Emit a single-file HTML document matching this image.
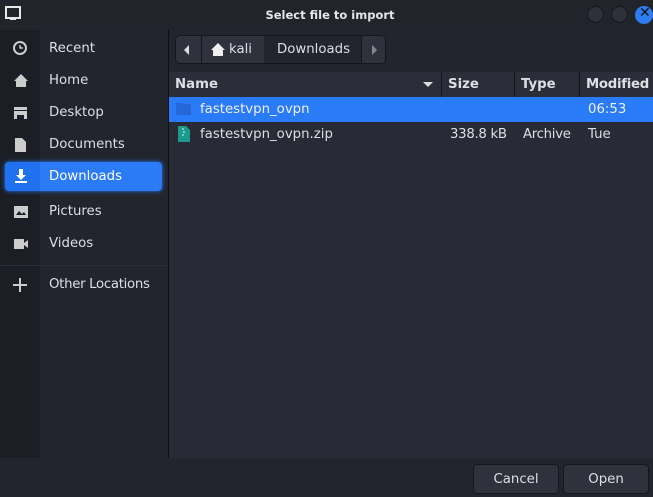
<!DOCTYPE html><html><head><style>
body{margin:0;width:653px;height:497px;background:#23252e;font-family:"DejaVu Sans","Liberation Sans",sans-serif;color:#dcdfe4;overflow:hidden;position:relative;font-size:13.3px}
.a{position:absolute}
.t{white-space:nowrap}
</style></head><body>
<div class="a" style="left:0;top:0;width:653px;height:30px;background:#22242c"></div>
<svg class="a" style="left:5px;top:6px" width="16" height="16"><rect x="1" y="1" width="14" height="11" fill="none" stroke="#e8e8e8" stroke-width="2"/><rect x="5" y="12" width="6" height="2" fill="#e8e8e8"/></svg>
<div class="a t" style="left:0;width:660px;top:8px;text-align:center;font-weight:bold;font-size:11.5px;color:#e4e6ea">Select file to import</div>
<div class="a" style="left:587px;top:6px;width:17px;height:17px;border-radius:50%;background:#2e313b;border:1px solid #15171c;box-sizing:border-box"></div>
<div class="a" style="left:611px;top:6px;width:17px;height:17px;border-radius:50%;background:#2e313b;border:1px solid #15171c;box-sizing:border-box"></div>
<div class="a" style="left:635px;top:6px;width:18px;height:18px;border-radius:50%;background:#2d7cf0"></div>
<div class="a t" style="left:639px;top:5px;font-size:14px;font-weight:bold;color:#111">✕</div>
<div class="a" style="left:0;top:30px;width:40px;height:428px;background:#1c1e25"></div>
<div class="a" style="left:0;top:265px;width:168px;height:1px;background:#2b2e37"></div>
<div class="a" style="left:168px;top:30px;width:1px;height:428px;background:#0e0f13"></div>
<div class="a" style="left:169px;top:30px;width:484px;height:428px;background:#282a36"></div>
<div class="a" style="left:169px;top:30px;width:484px;height:42px;background:#23252e"></div>
<div class="a" style="left:5px;top:162px;width:157px;height:29px;background:#2a7bf5;border-radius:4px;box-shadow:0 0 4px #2a7bf5"></div>
<div class="a" style="left:5px;top:162px;width:35px;height:29px;background:#2071f0;border-radius:4px 0 0 4px"></div>
<svg class="a" style="left:12px;top:40px" width="16" height="16"><circle cx="8" cy="8" r="6" fill="none" stroke="#ccc" stroke-width="2"/><path d="M8 5v3h3" stroke="#ccc" stroke-width="1.5" fill="none"/></svg>
<svg class="a" style="left:13px;top:73px" width="16" height="16"><path d="M1 8L8 1L15 8H13V14H3V8Z" fill="#ccc"/></svg>
<svg class="a" style="left:13px;top:105px" width="16" height="16"><rect x="1" y="2" width="13" height="3" fill="#ccc"/><rect x="1" y="6" width="13" height="8" fill="#ccc"/><rect x="4" y="10" width="7" height="4" fill="#1c1e25"/></svg>
<svg class="a" style="left:14px;top:137px" width="16" height="16"><path d="M1 1H8L12 5V15H1Z" fill="#ccc"/></svg>
<svg class="a" style="left:13px;top:168px" width="16" height="16"><path d="M6 1H10V7H13L8 12L3 7H6Z M2 13H14V15H2Z" fill="#fff"/></svg>
<svg class="a" style="left:13px;top:204px" width="16" height="16"><rect x="1" y="2" width="14" height="12" fill="#ccc"/><path d="M3 11L6 7L9 10L11 8L13 11Z" fill="#1c1e25"/></svg>
<svg class="a" style="left:13px;top:236px" width="16" height="16"><rect x="1" y="3" width="10" height="10" fill="#ccc"/><path d="M11 7L15 4V12L11 9Z" fill="#ccc"/></svg>
<svg class="a" style="left:12px;top:277px" width="16" height="16"><path d="M8 1V15M1 8H15" stroke="#ccc" stroke-width="2"/></svg>
<div class="a t" style="left:49px;top:41px">Recent</div>
<div class="a t" style="left:49px;top:73px">Home</div>
<div class="a t" style="left:49px;top:105px">Desktop</div>
<div class="a t" style="left:49px;top:137px">Documents</div>
<div class="a t" style="left:49px;top:169px;color:#fff">Downloads</div>
<div class="a t" style="left:49px;top:204px">Pictures</div>
<div class="a t" style="left:49px;top:236px">Videos</div>
<div class="a t" style="left:49px;top:277px;letter-spacing:-0.3px">Other Locations</div>
<div class="a" style="left:175px;top:35px;width:211px;height:29px;border:1px solid #15171c;border-radius:5px;background:#2f323c;box-sizing:border-box;overflow:hidden">
 <div class="a" style="left:25px;top:0;width:1px;height:29px;background:#15171c"></div>
 <div class="a" style="left:88px;top:0;width:97px;height:29px;background:#23252e"></div>
 <div class="a" style="left:185px;top:0;width:1px;height:29px;background:#15171c"></div>
</div>
<div class="a" style="left:184px;top:45px;width:0;height:0;border-top:5px solid transparent;border-bottom:5px solid transparent;border-right:5px solid #ddd"></div>
<div class="a" style="left:372px;top:45px;width:0;height:0;border-top:5px solid transparent;border-bottom:5px solid transparent;border-left:5px solid #888"></div>
<svg class="a" style="left:210px;top:42px" width="16" height="15"><path d="M1 8L8 1L15 8H13V14H3V8Z" fill="#eee"/></svg>
<div class="a t" style="left:229px;top:42px">kali</div>
<div class="a t" style="left:277px;top:42px">Downloads</div>
<div class="a" style="left:169px;top:72px;width:484px;height:25px;background:#2b2d38"></div>
<div class="a" style="left:441px;top:72px;width:1px;height:25px;background:#15171c"></div>
<div class="a" style="left:514px;top:72px;width:1px;height:25px;background:#15171c"></div>
<div class="a" style="left:579px;top:72px;width:1px;height:25px;background:#15171c"></div>
<div class="a t" style="left:175px;top:77px;font-weight:bold">Name</div>
<div class="a" style="left:423px;top:82px;border-left:5px solid transparent;border-right:5px solid transparent;border-top:5px solid #ddd"></div>
<div class="a t" style="left:448px;top:77px;font-weight:bold">Size</div>
<div class="a t" style="left:521px;top:77px;font-weight:bold">Type</div>
<div class="a t" style="left:586px;top:77px;font-weight:bold;letter-spacing:-0.3px">Modified</div>
<div class="a" style="left:169px;top:97px;width:484px;height:25px;background:#2a7bf8"></div>
<svg class="a" style="left:176px;top:102px" width="16" height="14"><path d="M0 1H6L7 2H15V13H0Z" fill="#2566d8"/></svg>
<div class="a t" style="left:200px;top:102px;color:#eef">fastestvpn_ovpn</div>
<div class="a t" style="left:588px;top:102px;color:#eef">06:53</div>
<svg class="a" style="left:178px;top:126px" width="12" height="16"><path d="M0 0H8L12 4V16H0Z" fill="#1d9a8e"/><path d="M5 2v2M6 5v2M5 8v2" stroke="#cfe" stroke-width="1"/></svg>
<div class="a t" style="left:200px;top:127px">fastestvpn_ovpn.zip</div>
<div class="a t" style="left:450px;top:127px;letter-spacing:-0.3px">338.8 kB</div>
<div class="a t" style="left:523px;top:127px;letter-spacing:-0.3px">Archive</div>
<div class="a t" style="left:588px;top:127px">Tue</div>
<div class="a" style="left:473px;top:464px;width:86px;height:30px;background:#2f323c;border:1px solid #15171c;border-radius:4px;box-sizing:border-box;text-align:center;line-height:29px">Cancel</div>
<div class="a" style="left:563px;top:464px;width:86px;height:30px;background:#2f323c;border:1px solid #15171c;border-radius:4px;box-sizing:border-box;text-align:center;line-height:29px">Open</div>
</body></html>
